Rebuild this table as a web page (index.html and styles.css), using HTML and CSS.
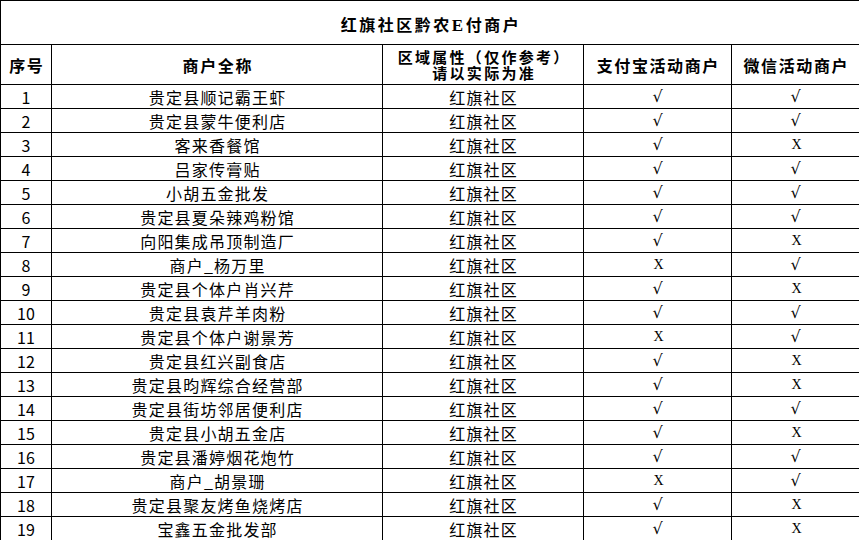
FILE: index.html
```html
<!DOCTYPE html>
<html lang="zh-CN">
<head>
<meta charset="utf-8">
<title>红旗社区黔农E付商户</title>
<link rel="stylesheet" href="styles.css">
</head>
<body>
<table class="sheet">
  <colgroup>
    <col class="c-no">
    <col class="c-name">
    <col class="c-area">
    <col class="c-ali">
    <col class="c-wx">
  </colgroup>
  <thead>
    <tr class="title-row"><th colspan="5">红旗社区黔农<span class="latin">E</span>付商户</th></tr>
    <tr class="head-row">
      <th>序号</th>
      <th>商户全称</th>
      <th class="two-line">区域属性（仅作参考）<br>请以实际为准</th>
      <th>支付宝活动商户</th>
      <th>微信活动商户</th>
    </tr>
  </thead>
  <tbody>
    <tr><td class="no">1</td><td>贵定县顺记霸王虾</td><td>红旗社区</td><td class="ok">√</td><td class="ok">√</td></tr>
    <tr><td class="no">2</td><td>贵定县蒙牛便利店</td><td>红旗社区</td><td class="ok">√</td><td class="ok">√</td></tr>
    <tr><td class="no">3</td><td>客来香餐馆</td><td>红旗社区</td><td class="ok">√</td><td class="no-mark">X</td></tr>
    <tr><td class="no">4</td><td>吕家传膏贴</td><td>红旗社区</td><td class="ok">√</td><td class="ok">√</td></tr>
    <tr><td class="no">5</td><td>小胡五金批发</td><td>红旗社区</td><td class="ok">√</td><td class="ok">√</td></tr>
    <tr><td class="no">6</td><td>贵定县夏朵辣鸡粉馆</td><td>红旗社区</td><td class="ok">√</td><td class="ok">√</td></tr>
    <tr><td class="no">7</td><td>向阳集成吊顶制造厂</td><td>红旗社区</td><td class="ok">√</td><td class="no-mark">X</td></tr>
    <tr><td class="no">8</td><td>商户_杨万里</td><td>红旗社区</td><td class="no-mark">X</td><td class="ok">√</td></tr>
    <tr><td class="no">9</td><td>贵定县个体户肖兴芹</td><td>红旗社区</td><td class="ok">√</td><td class="no-mark">X</td></tr>
    <tr><td class="no">10</td><td>贵定县袁芹羊肉粉</td><td>红旗社区</td><td class="ok">√</td><td class="ok">√</td></tr>
    <tr><td class="no">11</td><td>贵定县个体户谢景芳</td><td>红旗社区</td><td class="no-mark">X</td><td class="ok">√</td></tr>
    <tr><td class="no">12</td><td>贵定县红兴副食店</td><td>红旗社区</td><td class="ok">√</td><td class="no-mark">X</td></tr>
    <tr><td class="no">13</td><td>贵定县昀辉综合经营部</td><td>红旗社区</td><td class="ok">√</td><td class="no-mark">X</td></tr>
    <tr><td class="no">14</td><td>贵定县街坊邻居便利店</td><td>红旗社区</td><td class="ok">√</td><td class="ok">√</td></tr>
    <tr><td class="no">15</td><td>贵定县小胡五金店</td><td>红旗社区</td><td class="ok">√</td><td class="no-mark">X</td></tr>
    <tr><td class="no">16</td><td>贵定县潘婷烟花炮竹</td><td>红旗社区</td><td class="ok">√</td><td class="ok">√</td></tr>
    <tr><td class="no">17</td><td>商户_胡景珊</td><td>红旗社区</td><td class="no-mark">X</td><td class="ok">√</td></tr>
    <tr><td class="no">18</td><td>贵定县聚友烤鱼烧烤店</td><td>红旗社区</td><td class="ok">√</td><td class="no-mark">X</td></tr>
    <tr><td class="no">19</td><td>宝鑫五金批发部</td><td>红旗社区</td><td class="ok">√</td><td class="no-mark">X</td></tr>
  </tbody>
</table>
</body>
</html>
```

FILE: styles.css
```css
html, body {
  margin: 0;
  padding: 0;
  background: #ffffff;
  overflow: hidden;
}

.sheet {
  border-collapse: collapse;
  table-layout: fixed;
  width: 859px;
  font-family: "Noto Sans CJK SC", "Noto Sans", sans-serif;
  color: #000000;
}

.c-no { width: 51px; }
.c-name { width: 331px; }
.c-area { width: 201px; }
.c-ali { width: 148px; }
.c-wx { width: 128px; }

.sheet th,
.sheet td {
  border: 1px solid #000000;
  padding: 0;
  text-align: center;
  vertical-align: middle;
  white-space: nowrap;
  overflow: hidden;
}

.title-row { height: 44px; }
.title-row th {
  font-size: 16px;
  font-weight: 700;
  letter-spacing: 2.5px;
  padding: 4px 0 0 2px;
  line-height: 20px;
}
.title-row .latin {
  font-family: "Liberation Serif", serif;
  font-size: 17px;
}

.head-row { height: 40px; }
.head-row th {
  font-size: 16px;
  font-weight: 700;
  letter-spacing: 1.6px;
  line-height: 18px;
  padding-left: 1.6px;
}
.head-row th.two-line {
  font-size: 15px;
  line-height: 16px;
  letter-spacing: 2.3px;
  padding-left: 2.3px;
}

.sheet tbody tr { height: 24px; }
.sheet tbody td {
  font-size: 16px;
  font-weight: 400;
  letter-spacing: 1.2px;
  line-height: 20px;
  padding-left: 1.2px;
}
.sheet tbody td.no {
  letter-spacing: 0;
  padding-left: 0;
}
.sheet tbody td.ok {
  font-family: "DejaVu Sans", sans-serif;
  font-size: 16px;
  letter-spacing: 0;
  padding-left: 0;
}
.sheet tbody td.no-mark {
  font-family: "Liberation Serif", serif;
  font-size: 14px;
  letter-spacing: 0;
  padding: 0 0 0 2px;
}
```
